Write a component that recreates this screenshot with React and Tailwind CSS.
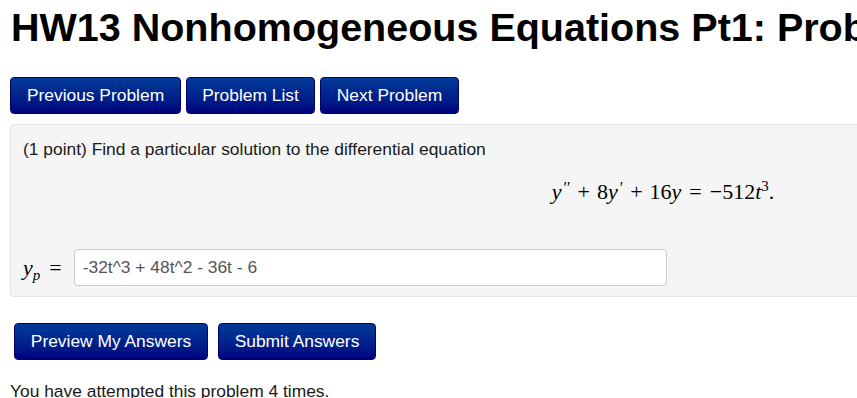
import React from 'react'

const btn =
  'h-[37px] flex items-center rounded-[4px] border border-[#000066] bg-gradient-to-b from-[#033a99] to-[#00007f] text-white text-[17.4px] leading-none whitespace-nowrap'

function MathEq() {
  return (
    <div className="text-center text-[22px] text-black whitespace-nowrap" style={{ fontFamily: '"Liberation Serif", serif' }}>
      <i>y</i>
      <span className="relative -top-[6px] text-[16px] ml-[2px]">′′</span>
      <span className="mx-[7px]">+</span>
      <span>8</span>
      <i>y</i>
      <span className="relative -top-[6px] text-[16px] ml-[2px]">′</span>
      <span className="mx-[7px]">+</span>
      <span>16</span>
      <i>y</i>
      <span className="mx-[8px]">=</span>
      <span>−512</span>
      <i>t</i>
      <span className="relative -top-[8px] text-[15px]">3</span>
      <span>.</span>
    </div>
  )
}

export default function App() {
  return (
    <div className="w-[857px] h-[398px] overflow-hidden bg-white text-black" style={{ fontFamily: '"Liberation Sans", Arial, sans-serif' }}>
      <h1 className="pl-[11px] pt-[5px] text-[39.5px] leading-[45px] font-bold whitespace-nowrap">
        HW13 Nonhomogeneous Equations Pt1: Problem 6
      </h1>

      <div className="flex gap-[5px] pl-[10px] mt-[27px]">
        <button className={`${btn} w-[171px] justify-center`}>Previous Problem</button>
        <button className={`${btn} w-[129px] justify-center`}>Problem List</button>
        <button className={`${btn} w-[139px] justify-center`}>Next Problem</button>
      </div>

      <div className="ml-[10px] mt-[10px] w-[1306px] h-[173px] rounded-[4px] border border-[#e3e3e3] bg-[#f5f5f5] px-[12px] pt-[13px]">
        <p className="text-[17.4px] leading-[22px] text-[#1a1a1a]">
          (1 point) Find a particular solution to the differential equation
        </p>
        <div className="mt-[15px]">
          <MathEq />
        </div>
        <div className="flex items-center mt-[41px]">
          <span className="text-[22px] whitespace-nowrap" style={{ fontFamily: '"Liberation Serif", serif' }}>
            <i>y</i>
            <i className="relative top-[5px] text-[15px]">p</i>
            <span className="ml-[9px]">=</span>
          </span>
          <div className="ml-[12px] w-[593px] h-[37px] flex items-center rounded-[4px] border border-[#cccccc] bg-white pl-[8px] text-[17.4px] text-[#555]">
            -32t^3 + 48t^2 - 36t - 6
          </div>
        </div>
      </div>

      <div className="flex gap-[10px] pl-[14px] mt-[26px]">
        <button className={`${btn} w-[194px] justify-center`}>Preview My Answers</button>
        <button className={`${btn} w-[158px] justify-center`}>Submit Answers</button>
      </div>

      <p className="pl-[10px] mt-[20px] text-[17.4px] leading-[22px] text-[#1a1a1a]">
        You have attempted this problem 4 times.
      </p>
    </div>
  )
}
